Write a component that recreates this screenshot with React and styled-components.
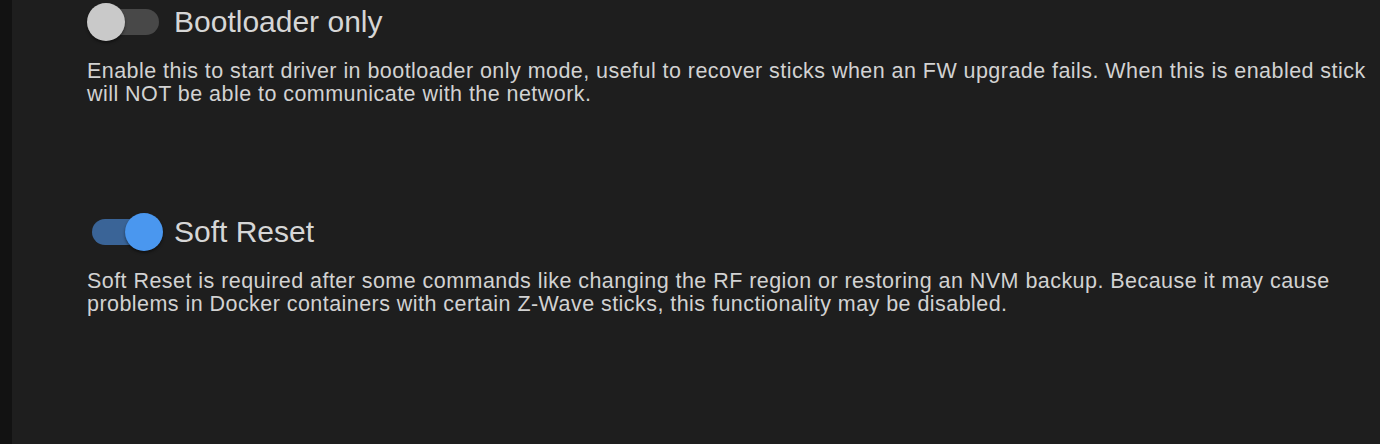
import React, { useState } from "react";
import styled, { createGlobalStyle } from "styled-components";

const GlobalStyle = createGlobalStyle`
  html, body {
    margin: 0;
    padding: 0;
    background: #1e1e1e;
  }
  body {
    font-family: "Liberation Sans", Arial, Helvetica, sans-serif;
  }
`;

const settings = [
  {
    key: "bootloader",
    title: "Bootloader only",
    enabled: false,
    description:
      "Enable this to start driver in bootloader only mode, useful to recover sticks when an FW upgrade fails. When this is enabled stick will NOT be able to communicate with the network.",
  },
  {
    key: "softReset",
    title: "Soft Reset",
    enabled: true,
    description:
      "Soft Reset is required after some commands like changing the RF region or restoring an NVM backup. Because it may cause problems in Docker containers with certain Z-Wave sticks, this functionality may be disabled.",
  },
];

const Switch = ({ on, onToggle }) => (
  <SwitchBox onClick={onToggle} role="switch" aria-checked={on}>
    <Track $on={on} />
    <Thumb $on={on} />
  </SwitchBox>
);

const App = () => {
  const [values, setValues] = useState(
    Object.fromEntries(settings.map((s) => [s.key, s.enabled]))
  );

  function toggle(key) {
    setValues((v) => ({ ...v, [key]: !v[key] }));
  }

  return (
    <>
      <GlobalStyle />
      <Page>
        <Sidebar />
        <Content>
          {settings.map((s) => (
            <Section key={s.key}>
              <SwitchRow>
                <Switch on={values[s.key]} onToggle={() => toggle(s.key)} />
                <Label>{s.title}</Label>
              </SwitchRow>
              <Description>{s.description}</Description>
            </Section>
          ))}
        </Content>
      </Page>
    </>
  );
};

const Page = styled.div`
  display: flex;
  width: 100vw;
  height: 100vh;
  overflow: hidden;
  background: #1e1e1e;
`;

const Sidebar = styled.div`
  flex: 0 0 12px;
  background: #121212;
`;

const Content = styled.div`
  flex: 1;
  display: flex;
  flex-direction: column;
  gap: 107px;
  padding: 3px 3px 0 75px;
`;

const Section = styled.div`
  display: flex;
  flex-direction: column;
  gap: 19px;
`;

const SwitchRow = styled.div`
  display: flex;
  align-items: center;
  gap: 11px;
  height: 38px;
`;

const SwitchBox = styled.div`
  position: relative;
  width: 76px;
  height: 38px;
  flex: 0 0 76px;
  cursor: pointer;
`;

const Track = styled.div`
  position: absolute;
  top: 6px;
  left: 5px;
  right: 4px;
  height: 26px;
  border-radius: 13px;
  background: ${({ $on }) => ($on ? "#3a6497" : "#484848")};
`;

const Thumb = styled.div`
  position: absolute;
  top: 0;
  left: ${({ $on }) => ($on ? "38px" : "0")};
  width: 38px;
  height: 38px;
  border-radius: 50%;
  background: ${({ $on }) => ($on ? "#4a97ef" : "#c9c9c9")};
  box-shadow: 0 2px 3px rgba(0, 0, 0, 0.45);
  transition: left 0.15s;
`;

const Label = styled.span`
  font-size: 30px;
  color: #d6d6d6;
  line-height: 1;
`;

const Description = styled.p`
  margin: 0;
  font-size: 21.5px;
  letter-spacing: 0.45px;
  line-height: 23px;
  color: #d2d2d2;
`;

export default App;
